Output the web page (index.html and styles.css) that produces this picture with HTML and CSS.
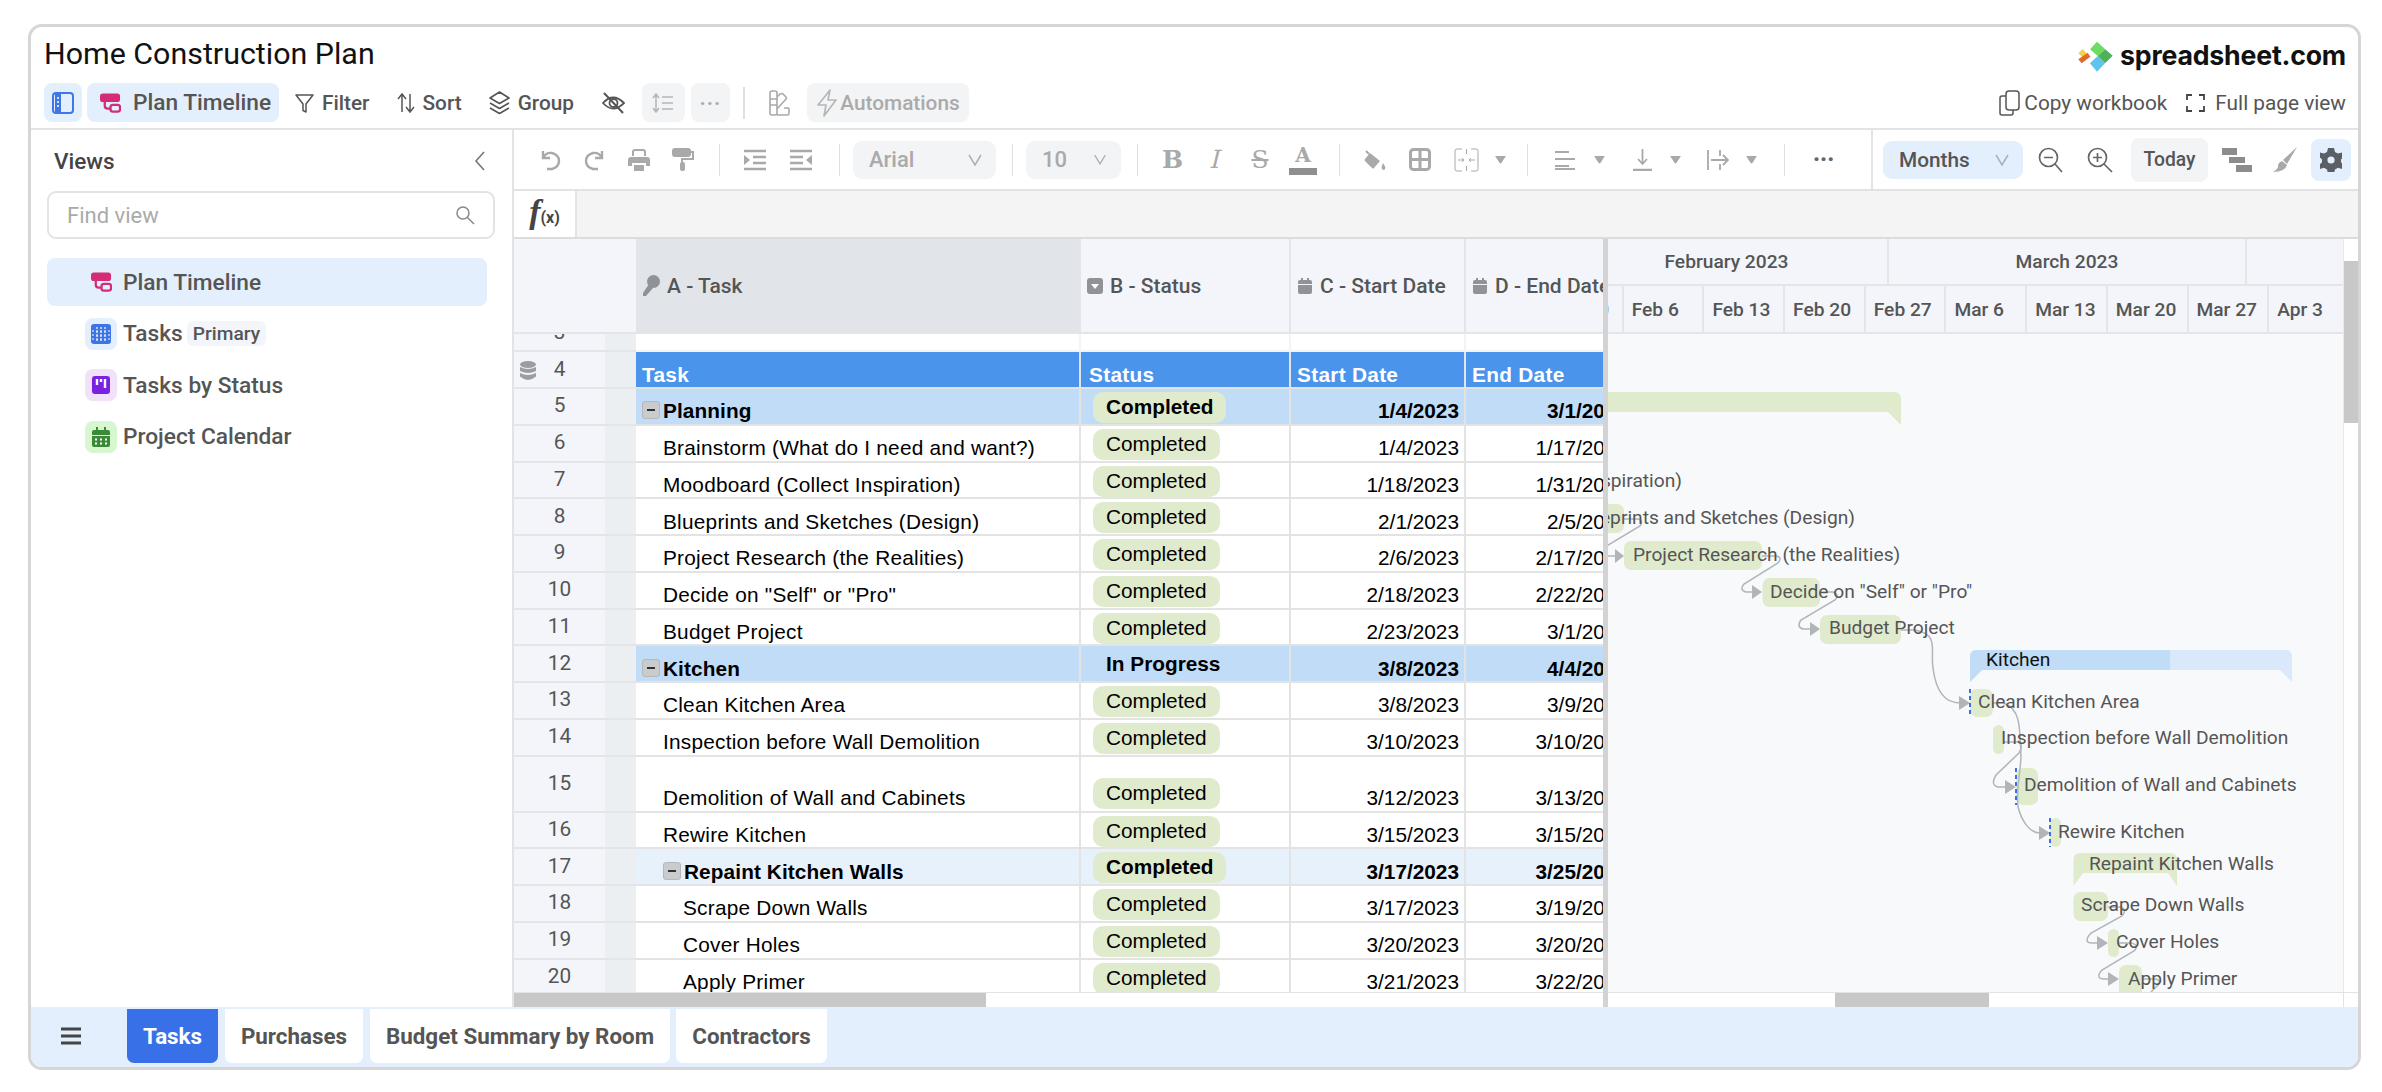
FILE: index.html
```html
<!DOCTYPE html>
<html lang="en">
<head>
<meta charset="utf-8">
<title>Home Construction Plan</title>
<link rel="stylesheet" href="styles.css">
</head>
<body>
<svg class="defs" width="0" height="0">
  <symbol id="timeline" viewBox="0 0 22 20"><rect x="0" y="0" width="21" height="9" rx="3" fill="#d42d76"/><path d="M5 8v5q0 3 3 3h3" fill="none" stroke="#d42d76" stroke-width="2.4"/><rect x="11" y="12" width="10" height="7" rx="2.5" fill="none" stroke="#d42d76" stroke-width="2.4"/></symbol>
  <symbol id="caret" viewBox="0 0 14 10"><path d="M1 1h12L8 9q-1 1-2 0z" fill="#a9a9a9"/></symbol>
  <symbol id="chev" viewBox="0 0 16 12"><path d="M2 1l6 10 6-10" fill="none" stroke="#a9b0b8" stroke-width="1.5"/></symbol>
  <symbol id="calend" viewBox="0 0 16 16"><path d="M1 4q0-2 2-2h1V0h2v2h4V0h2v2h1q2 0 2 2v2H1zM1 7h14v7q0 2-2 2H3q-2 0-2-2z" fill="#8f9296"/></symbol>
</svg>
<div class="window">
  <header class="head">
    <div class="head-top">
      <h1 class="title">Home Construction Plan</h1>
      <div class="logo">
        <svg class="logo-mark" width="36" height="32" viewBox="0 0 36 32"><polygon points="20,1.7 28.3,9.3 20.7,16 13,9.3" fill="#6cdc63"/><polygon points="28.3,9.3 35.7,15.7 28,23.3 20.7,16" fill="#4eb05b"/><polygon points="20.7,16 28,23.3 20,31.7 13,23.3" fill="#5cc4ee"/><polygon points="5.7,9 9.7,13.3 5.7,17.3 1.3,13.3" fill="#f7cf4a"/><polygon points="10.7,12.7 13.3,16.7 4.7,23.3 1.3,19.3" fill="#dd6b2b"/></svg>
        <span class="logo-text">spreadsheet.com</span>
      </div>
    </div>
    <div class="head-bar">
      <button class="hb-btn side-toggle"><svg width="22" height="22" viewBox="0 0 22 22"><rect x="1" y="1" width="20" height="20" rx="3" fill="none" stroke="#3f78e6" stroke-width="2"/><path d="M3 2h6v18H3z" fill="#3f78e6"/><path d="M5 6h2M5 10h2M5 14h2" stroke="#fff" stroke-width="1.6"/></svg></button>
      <button class="hb-btn plan-btn"><svg width="21" height="20"><use href="#timeline"/></svg><span>Plan Timeline</span></button>
      <span class="tool t-filter"><svg width="19" height="22" viewBox="0 0 19 22"><path d="M1 3h17l-7 9v8l-3-1.5V12z" fill="none" stroke="#555" stroke-width="1.5" stroke-linejoin="round"/></svg>Filter</span>
      <span class="tool t-sort"><svg width="18" height="22" viewBox="0 0 18 22"><path d="M5 20V3M1 7l4-5 4 5M13 2v17M9 15l4 5 4-5" fill="none" stroke="#555" stroke-width="1.5"/></svg>Sort</span>
      <span class="tool t-group"><svg width="21" height="24" viewBox="0 0 21 24"><path d="M10.500 1L20 7l-9.500 5.500L1 7zM1 12l9.500 5.500L20 12M1 17l9.500 5.500L20 17" fill="none" stroke="#555" stroke-width="1.6" stroke-linejoin="round"/></svg>Group</span>
      <svg class="t-hide" width="23" height="22" viewBox="0 0 23 22"><path d="M1 11q10-11 21 0-11 11-21 0z" fill="none" stroke="#555" stroke-width="1.8"/><circle cx="11.500" cy="11" r="4" fill="none" stroke="#555" stroke-width="1.800"/><path d="M2 1l19 20" stroke="#555" stroke-width="2"/></svg>
      <button class="hb-off t-line"><svg width="22" height="22" viewBox="0 0 22 22"><path d="M4 3v16M1 6l3-4 3 4M1 16l3 4 3-4M10 5h11M10 11h11M10 17h11" fill="none" stroke="#b5b5b5" stroke-width="1.500"/></svg></button>
      <button class="hb-off t-more">&#183;&#183;&#183;</button>
      <i class="vsep"></i>
      <svg class="t-pal" width="22" height="26" viewBox="0 0 22 26"><path d="M2 3q0-2 2-2h3q2 0 2 2v20q0 2-2 2H4q-2 0-2-2zM2 9h7M2 15h7M9 7l3-3q1-1 3 0l3 3q1 1 0 2L9 19M9 25h11q1 0 1-2v-4q0-1-1-1h-4" fill="none" stroke="#a9a9a9" stroke-width="1.600"/></svg>
      <button class="hb-off auto"><svg width="22" height="28" viewBox="0 0 22 28"><path d="M14 1L2 16h8l-2 11 12-16h-8z" fill="none" stroke="#b5b5b5" stroke-width="1.600" stroke-linejoin="round"/></svg><span>Automations</span></button>
      <span class="hb-right">
        <span class="link"><svg width="21" height="26" viewBox="0 0 21 26"><path d="M7 6H3q-2 0-2 2v15q0 2 2 2h9q2 0 2-2v-3" fill="none" stroke="#555" stroke-width="1.500"/><rect x="7" y="1" width="13" height="19" rx="3" fill="none" stroke="#555" stroke-width="1.500"/></svg>Copy workbook</span>
        <span class="link full"><svg width="19" height="18" viewBox="0 0 19 18"><path d="M1 6V1h5M13 1h5v5M18 12v5h-5M6 17H1v-5" fill="none" stroke="#444" stroke-width="1.800"/></svg>Full page view</span>
      </span>
    </div>
  </header>

  <main class="main">
    <aside class="side">
      <div class="side-head"><span class="views">Views</span><svg width="12" height="20" viewBox="0 0 12 20"><path d="M10 1L2 10l8 9" fill="none" stroke="#777" stroke-width="1.600"/></svg></div>
      <div class="search"><span>Find view</span><svg width="20" height="20" viewBox="0 0 20 20"><circle cx="8" cy="8" r="6" fill="none" stroke="#888" stroke-width="1.500"/><path d="M12.500 12.500L19 19" stroke="#888" stroke-width="1.500"/></svg></div>
      <nav class="view-list">
        <a class="view active"><span class="tile"><svg width="21" height="20"><use href="#timeline"/></svg></span><span>Plan Timeline</span></a>
        <a class="view"><span class="tile blue"><svg width="20" height="20" viewBox="0 0 20 20"><rect width="20" height="20" rx="3" fill="#3e75e6"/><path d="M1 7h18M1 11h18M1 15h18M6 3v16M10 3v16M14 3v16" stroke="#fff" stroke-width="1.200" stroke-dasharray="2 2"/></svg></span><span>Tasks</span><em class="badge">Primary</em></a>
        <a class="view"><span class="tile purple"><svg width="18" height="18" viewBox="0 0 18 18"><rect width="18" height="18" rx="3" fill="#7a22e0"/><path d="M5 3v6M9 3v3M13 3v9" stroke="#fff" stroke-width="2.400"/></svg></span><span>Tasks by Status</span></a>
        <a class="view"><span class="tile green"><svg width="18" height="20" viewBox="0 0 18 20"><path d="M0 5q0-2 2-2h2V0h2v3h6V0h2v3h2q2 0 2 2v3H0zM0 9h18v9q0 2-2 2H2q-2 0-2-2z" fill="#3a8a38"/><path d="M3 12.500h12M3 16.500h12" stroke="#fff" stroke-width="1.800" stroke-dasharray="2 3"/></svg></span><span>Project Calendar</span></a>
      </nav>
    </aside>

    <section class="work">
      <div class="ribbon">
        <svg class="ic" width="21" height="22" viewBox="0 0 21 22"><path d="M3 2v7h7M3 9q3-6 9-5 7 2 7 8t-7 8H7" fill="none" stroke="#a9a9a9" stroke-width="2.400"/></svg>
        <svg class="ic g23" width="21" height="22" viewBox="0 0 21 22"><path d="M18 2v7h-7M18 9q-3-6-9-5-7 2-7 8t7 8h5" fill="none" stroke="#a9a9a9" stroke-width="2.400"/></svg>
        <svg class="ic g23" width="22" height="22" viewBox="0 0 22 22"><path d="M5 7V3q0-2 2-2h8q2 0 2 2v4" fill="none" stroke="#a9a9a9" stroke-width="2"/><path d="M3 8h16q3 0 3 3v6h-4v-3H4v3H0v-6q0-3 3-3zM6 16h10v6H6z" fill="#a9a9a9"/></svg>
        <svg class="ic g22" width="22" height="23" viewBox="0 0 22 23"><rect x="0" y="0" width="19" height="9" rx="3" fill="#a9a9a9"/><path d="M19 4h2v7H10v4" fill="none" stroke="#a9a9a9" stroke-width="2"/><rect x="8" y="14" width="5" height="9" rx="2" fill="#a9a9a9"/></svg>
        <i class="vsep rib-sep m25"></i>
        <svg class="ic g24" width="22" height="22" viewBox="0 0 22 22"><path d="M0 2h22M9 8h13M9 14h13M0 20h22" stroke="#a9a9a9" stroke-width="2.400"/><path d="M0 6l6 5-6 5z" fill="#a9a9a9"/></svg>
        <svg class="ic g24" width="22" height="22" viewBox="0 0 22 22"><path d="M0 2h22M0 8h13M0 14h13M0 20h22" stroke="#a9a9a9" stroke-width="2.400"/><path d="M22 6l-6 5 6 5z" fill="#a9a9a9"/></svg>
        <i class="vsep rib-sep m27"></i>
        <span class="sel font g13"><span>Arial</span><svg width="16" height="12"><use href="#chev"/></svg></span>
        <i class="vsep rib-sep m16"></i>
        <span class="sel size g13"><span>10</span><svg width="14" height="11"><use href="#chev"/></svg></span>
        <i class="vsep rib-sep m16"></i>
        <b class="glyph g24">B</b>
        <i class="glyph slant g24">I</i>
        <s class="glyph g24">S</s>
        <span class="color-a g19"><span>A</span></span>
        <i class="vsep rib-sep m22"></i>
        <svg class="ic g24" width="22" height="22" viewBox="0 0 22 22"><path d="M2 2l3 3" stroke="#a9a9a9" stroke-width="2"/><path d="M6 4l10 8-6 7q-1 1-2 0L1 12q-1-1 0-2z" fill="#a9a9a9"/><path d="M19 14q3 4 2 6t-3 0q-1-2 1-6z" fill="#a9a9a9"/></svg>
        <svg class="ic g23" width="22" height="23" viewBox="0 0 22 23"><rect x="1.500" y="1.500" width="19" height="20" rx="3" fill="none" stroke="#a9a9a9" stroke-width="3"/><path d="M11 2v19M2 11.500h18" stroke="#a9a9a9" stroke-width="3"/></svg>
        <svg class="ic g23" width="25" height="24" viewBox="0 0 25 24"><path d="M8 1H3Q1 1 1 3v18q0 2 2 2h5M17 1h5q2 0 2 2v18q0 2-2 2h-5M12.500 1v5M12.500 18v5M4 12h6M8 10l2 2-2 2M21 12h-6M17 10l-2 2 2 2" fill="none" stroke="#a9a9a9" stroke-width="1"/></svg>
        <svg class="cr g15" width="13" height="9"><use href="#caret"/></svg>
        <i class="vsep rib-sep m20"></i>
        <svg class="ic g27" width="20" height="20" viewBox="0 0 20 20"><path d="M0 2h14M0 9h20M0 16h14M0 19h20" stroke="#a9a9a9" stroke-width="2"/></svg>
        <svg class="cr g18" width="13" height="9"><use href="#caret"/></svg>
        <svg class="ic g27" width="19" height="22" viewBox="0 0 19 22"><path d="M9.500 0v14M5 10l4.500 5 4.500-5" fill="none" stroke="#a9a9a9" stroke-width="1.800"/><path d="M0 21h19" stroke="#a9a9a9" stroke-width="2.600"/></svg>
        <svg class="cr g17" width="13" height="9"><use href="#caret"/></svg>
        <svg class="ic g25" width="22" height="20" viewBox="0 0 22 20"><path d="M1 0v20M13 0v6M13 14v6M4 10h16M16 5l5 5-5 5" fill="none" stroke="#a9a9a9" stroke-width="1.800"/></svg>
        <svg class="cr g16" width="13" height="9"><use href="#caret"/></svg>
        <i class="vsep rib-sep m26"></i>
        <span class="dots">&#183;&#183;&#183;</span>
        <i class="rib-full"></i>
        <span class="months"><span>Months</span><svg width="16" height="12"><use href="#chev"/></svg></span>
        <svg class="ic g15" width="25" height="26" viewBox="0 0 25 26"><circle cx="10.500" cy="10.500" r="9" fill="none" stroke="#666" stroke-width="1.700"/><path d="M17 17l7 8M6 10.500h9" stroke="#666" stroke-width="1.700"/></svg>
        <svg class="ic g24" width="26" height="26" viewBox="0 0 26 26"><circle cx="10.500" cy="10.500" r="9" fill="none" stroke="#666" stroke-width="1.700"/><path d="M17 17l8 8M6 10.500h9M10.500 6v9" stroke="#666" stroke-width="1.700"/></svg>
        <button class="today">Today</button>
        <svg class="ic g14" width="30" height="24" viewBox="0 0 30 24"><path d="M0 0h15v7H0zM7 9h16v6H7zM14 17h16v7H14z" fill="#8c8c8c"/></svg>
        <svg class="ic g21" width="24" height="25" viewBox="0 0 24 25"><path d="M24 0L10 13l4 4zM9 14l5 4q-2 7-14 7 6-3 5-7 1-3 4-4z" fill="#a9a9a9"/></svg>
        <span class="gear"><svg width="22" height="24" viewBox="0 0 22 24"><path d="M8 0h6l1 4 3 1.600 4-1.200 2 4-3 3v2.800l3 3-2 3.800-4-1.200-3 1.600-1 4H8l-1-4-3-1.600-4 1.200-1-3.800 3-3v-2.800l-3-3 1-4 4 1.200L7 4z" fill="#5a6066"/><circle cx="11" cy="12" r="3.600" fill="#e4effd"/></svg></span>
      </div>

      <div class="formula"><span class="fx"><i>f</i><b>(x)</b></span></div>

      <div class="panes">
        <div class="grid-pane">
          <div class="row col-head">
            <div class="hc"></div><div class="hc"></div>
            <div class="hc sel-col"><svg width="18" height="22" viewBox="0 0 18 22"><circle cx="11.500" cy="6.500" r="6.500" fill="#8f9296"/><path d="M7 9L1 18v3h3l7-8z" fill="#8f9296"/></svg>A - Task</div>
            <div class="hc"><svg width="16" height="16" viewBox="0 0 16 16"><rect width="16" height="16" rx="3" fill="#8f9296"/><path d="M4 6h8l-4 5z" fill="#fff"/></svg>B - Status</div>
            <div class="hc"><svg width="16" height="16"><use href="#calend"/></svg>C - Start Date</div>
            <div class="hc"><svg width="16" height="16"><use href="#calend"/></svg>D - End Date</div>
          </div>
          <div class="rows">
            <div class="row r3"><div class="n">3</div><div class="g"></div><div class="c"></div><div class="c"></div><div class="c"></div><div class="c"></div></div>
            <div class="row th"><div class="n"><svg class="db" width="16" height="19" viewBox="0 0 16 19"><ellipse cx="8" cy="3.500" rx="8" ry="3.500" fill="#9a9da1"/><path d="M0 6q8 4 16 0v4q-8 4-16 0zM0 12q8 4 16 0v3.500q-8 7-16 0z" fill="#9a9da1"/></svg>4</div><div class="g"></div><div class="c">Task</div><div class="c st">Status</div><div class="c">Start Date</div><div class="c">End Date</div></div>
            <div class="row grp"><div class="n">5</div><div class="g"></div><div class="c name"><span class="minus"></span>Planning</div><div class="c st"><span class="chip">Completed</span></div><div class="c d">1/4/2023</div><div class="c d">3/1/2023</div></div>
            <div class="row"><div class="n">6</div><div class="g"></div><div class="c l1">Brainstorm (What do I need and want?)</div><div class="c st"><span class="chip">Completed</span></div><div class="c d">1/4/2023</div><div class="c d">1/17/2023</div></div>
            <div class="row"><div class="n">7</div><div class="g"></div><div class="c l1">Moodboard (Collect Inspiration)</div><div class="c st"><span class="chip">Completed</span></div><div class="c d">1/18/2023</div><div class="c d">1/31/2023</div></div>
            <div class="row"><div class="n">8</div><div class="g"></div><div class="c l1">Blueprints and Sketches (Design)</div><div class="c st"><span class="chip">Completed</span></div><div class="c d">2/1/2023</div><div class="c d">2/5/2023</div></div>
            <div class="row"><div class="n">9</div><div class="g"></div><div class="c l1">Project Research (the Realities)</div><div class="c st"><span class="chip">Completed</span></div><div class="c d">2/6/2023</div><div class="c d">2/17/2023</div></div>
            <div class="row"><div class="n">10</div><div class="g"></div><div class="c l1">Decide on "Self" or "Pro"</div><div class="c st"><span class="chip">Completed</span></div><div class="c d">2/18/2023</div><div class="c d">2/22/2023</div></div>
            <div class="row"><div class="n">11</div><div class="g"></div><div class="c l1">Budget Project</div><div class="c st"><span class="chip">Completed</span></div><div class="c d">2/23/2023</div><div class="c d">3/1/2023</div></div>
            <div class="row grp"><div class="n">12</div><div class="g"></div><div class="c name"><span class="minus"></span>Kitchen</div><div class="c st"><span class="chip plain">In Progress</span></div><div class="c d">3/8/2023</div><div class="c d">4/4/2023</div></div>
            <div class="row"><div class="n">13</div><div class="g"></div><div class="c l1">Clean Kitchen Area</div><div class="c st"><span class="chip">Completed</span></div><div class="c d">3/8/2023</div><div class="c d">3/9/2023</div></div>
            <div class="row"><div class="n">14</div><div class="g"></div><div class="c l1">Inspection before Wall Demolition</div><div class="c st"><span class="chip">Completed</span></div><div class="c d">3/10/2023</div><div class="c d">3/10/2023</div></div>
            <div class="row tall"><div class="n">15</div><div class="g"></div><div class="c l1">Demolition of Wall and Cabinets</div><div class="c st"><span class="chip">Completed</span></div><div class="c d">3/12/2023</div><div class="c d">3/13/2023</div></div>
            <div class="row"><div class="n">16</div><div class="g"></div><div class="c l1">Rewire Kitchen</div><div class="c st"><span class="chip">Completed</span></div><div class="c d">3/15/2023</div><div class="c d">3/15/2023</div></div>
            <div class="row sub"><div class="n">17</div><div class="g"></div><div class="c name sub-name"><span class="minus"></span>Repaint Kitchen Walls</div><div class="c st"><span class="chip">Completed</span></div><div class="c d">3/17/2023</div><div class="c d">3/25/2023</div></div>
            <div class="row"><div class="n">18</div><div class="g"></div><div class="c l2">Scrape Down Walls</div><div class="c st"><span class="chip">Completed</span></div><div class="c d">3/17/2023</div><div class="c d">3/19/2023</div></div>
            <div class="row"><div class="n">19</div><div class="g"></div><div class="c l2">Cover Holes</div><div class="c st"><span class="chip">Completed</span></div><div class="c d">3/20/2023</div><div class="c d">3/20/2023</div></div>
            <div class="row"><div class="n">20</div><div class="g"></div><div class="c l2">Apply Primer</div><div class="c st"><span class="chip">Completed</span></div><div class="c d">3/21/2023</div><div class="c d">3/22/2023</div></div>
          </div>
          <div class="hscroll left-scroll"><i></i></div>
        </div>
        <div class="splitter"></div>
        <div class="gantt">
          <div class="gantt-body">
            <div class="gantt-view">
              <div class="months-row"><div class="mo feb">February 2023</div><div class="mo mar">March 2023</div><div class="mo apr"></div></div>
              <div class="weeks-row"><div class="wk">Jan 30</div><div class="wk">Feb 6</div><div class="wk">Feb 13</div><div class="wk">Feb 20</div><div class="wk">Feb 27</div><div class="wk">Mar 6</div><div class="wk">Mar 13</div><div class="wk">Mar 20</div><div class="wk">Mar 27</div><div class="wk">Apr 3</div></div>
              <div class="canvas">
                <svg class="chart" width="736" height="658" viewBox="1608 334 736 658">
                  <g fill="#e0ebcd">
                    <path d="M1590 392H1894Q1901 392 1901 399V425L1888 412H1590Z"/>
                    <rect x="1590" y="504" width="34" height="29" rx="7"/>
                    <rect x="1624" y="541" width="138" height="29" rx="7"/>
                    <rect x="1762.500" y="578" width="57.500" height="29" rx="7"/>
                    <rect x="1820" y="615" width="81" height="29" rx="7"/>
                    <rect x="1970" y="689" width="23" height="28" rx="7"/>
                    <rect x="1993" y="725" width="11" height="29" rx="5.500"/>
                    <rect x="2016" y="768" width="22" height="37" rx="7"/>
                    <rect x="2050" y="818" width="11" height="29" rx="5.500"/>
                    <path d="M2073.500 886V860Q2073.500 853 2080 853H2170Q2177 853 2177 860V886L2168 873H2083Z"/>
                    <rect x="2073.500" y="892" width="34.500" height="29" rx="7"/>
                    <rect x="2108" y="929" width="11" height="28" rx="5.500"/>
                    <rect x="2119" y="965" width="23" height="40" rx="7"/>
                  </g>
                  <path d="M1970 682V657Q1970 650 1977 650H2285Q2292 650 2292 657V682L2280 670H1982Z" fill="#d9e8fa"/>
                  <path d="M1970 682V657Q1970 650 1977 650H2170V670H1982Z" fill="#c0dcf7"/>
                  <g fill="none" stroke="#b1b4b9" stroke-width="1.500">
                    <path d="M1624 519H1638Q1644 520 1640 526L1600 550"/>
                    <path d="M1608 556H1616"/>
                    <path d="M1762 556H1776Q1783 557 1778 563L1744 584Q1739 590 1746 592H1753"/>
                    <path d="M1820 592H1833Q1840 594 1835 600L1801 620Q1796 627 1803 629H1811"/>
                    <path d="M1901 630H1915C1940 635 1930 650 1933 668C1936 692 1945 703 1960 703"/>
                    <path d="M1993 703H2003C2020 708 2020 725 2021 757C2020 775 2016 790 2018 807C2022 822 2030 833 2040 833"/>
                    <path d="M2004 742H2018Q2024 745 2019 753L1996 775Q1990 785 1998 787H2006"/>
                    <path d="M2108 907H2120Q2128 909 2122 916L2091 933Q2083 942 2091 943H2098"/>
                    <path d="M2119 943H2131Q2140 945 2134 951L2102 970Q2095 978 2103 979H2109"/>
                    <path d="M2142 979H2156Q2162 981 2158 985L2151 992"/>
                  </g>
                  <g fill="#b1b4b9">
                    <path d="M1615 549L1624 556L1615 563Z"/>
                    <path d="M1752 585L1762 592L1752 599Z"/>
                    <path d="M1810 622L1820 629L1810 636Z"/>
                    <path d="M1959 696L1970 703L1959 710Z"/>
                    <path d="M2005 780L2016 787L2005 794Z"/>
                    <path d="M2039 826L2050 833L2039 840Z"/>
                    <path d="M2097 936L2108 943L2097 950Z"/>
                    <path d="M2108 972L2119 979L2108 986Z"/>
                  </g>
                  <g fill="none" stroke="#3a6fe6" stroke-width="2" stroke-dasharray="4 3">
                    <path d="M1970 689V717M2016 768V805M2050 818V847"/>
                  </g>
                </svg>
                <span class="lb lb-end" style="right:661px;top:135px">Moodboard (Collect Inspiration)</span>
                <span class="lb lb-end" style="right:488px;top:172px">Blueprints and Sketches (Design)</span>
                <span class="lb" style="left:25px;top:209px">Project Research (the Realities)</span>
                <span class="lb" style="left:162px;top:246px">Decide on "Self" or "Pro"</span>
                <span class="lb" style="left:221px;top:282px">Budget Project</span>
                <span class="lb dark" style="left:378px;top:314px">Kitchen</span>
                <span class="lb" style="left:370px;top:356px">Clean Kitchen Area</span>
                <span class="lb" style="left:393px;top:392px">Inspection before Wall Demolition</span>
                <span class="lb" style="left:416px;top:439px">Demolition of Wall and Cabinets</span>
                <span class="lb" style="left:450px;top:486px">Rewire Kitchen</span>
                <span class="lb" style="left:481px;top:518px">Repaint Kitchen Walls</span>
                <span class="lb" style="left:473px;top:559px">Scrape Down Walls</span>
                <span class="lb" style="left:508px;top:596px">Cover Holes</span>
                <span class="lb" style="left:520px;top:633px">Apply Primer</span>
              </div>
            </div>
            <div class="vscroll"><i></i></div>
          </div>
          <div class="hscroll right-scroll"><i></i><b class="corner"></b></div>
        </div>
      </div>
    </section>
  </main>

  <footer class="tabs">
    <span class="burger"><svg width="20" height="18" viewBox="0 0 20 18"><path d="M0 2h20M0 9h20M0 16h20" stroke="#444" stroke-width="3"/></svg></span>
    <button class="tab on">Tasks</button>
    <button class="tab purchases">Purchases</button>
    <button class="tab budget">Budget Summary by Room</button>
    <button class="tab contractors">Contractors</button>
  </footer>
</div>
</body>
</html>
```

FILE: styles.css
```css
* { box-sizing: border-box; }
html, body { margin: 0; padding: 0; background: #fff; }
body { font-family: Roboto, "Liberation Sans", sans-serif; color: #555; overflow: hidden; }
button { font: inherit; border: 0; padding: 0; background: none; color: inherit; }
svg { display: block; flex: none; }
.defs { position: absolute; }

.window { width: 2333px; height: 1046px; margin: 24px 0 0 28px; border: 3px solid #d6d6d6; border-radius: 14px; overflow: hidden; display: flex; flex-direction: column; background: #fff; }

.head { height: 103px; border-bottom: 2px solid #e3e3e3; flex: none; }
.head-top { height: 56px; display: flex; justify-content: space-between; padding: 0 12px 0 13px; }
.title { margin: 10px 0 0; font-size: 30.4px; line-height: 34px; font-weight: 400; color: #111; }
.logo { display: flex; align-items: flex-start; padding-top: 13px; }
.logo-text { font-family: Inter, sans-serif; font-weight: 700; font-size: 26.7px; line-height: 34px; color: #111; margin-left: 7px; letter-spacing: -0.2px; margin-top: -2px; }

.head-bar { height: 39px; display: flex; align-items: center; padding: 0 12px 0 13px; font-size: 20.8px; font-weight: 500; color: #555; }
.hb-btn { height: 39px; border-radius: 8px; background: #e4effd; display: flex; align-items: center; }
.side-toggle { width: 38px; justify-content: center; }
.plan-btn { width: 192px; margin-left: 5px; padding-left: 13px; gap: 12px; font-weight: 500; font-size: 22.7px; }
.tool { display: flex; align-items: center; gap: 8px; }
.t-filter { margin-left: 16px; }
.t-sort { margin-left: 28px; gap: 7px; }
.t-group { margin-left: 27px; }
.t-hide { margin-left: 28px; }
.hb-off { height: 39px; border-radius: 8px; background: #f3f4f5; display: flex; align-items: center; justify-content: center; color: #aaa; }
.t-line { width: 43px; margin-left: 17px; }
.t-more { width: 39px; margin-left: 6px; font-weight: 700; letter-spacing: 1px; }
.vsep { display: block; width: 2px; height: 32px; background: #e2dede; margin-left: 13px; flex: none; }
.t-pal { margin-left: 23px; }
.auto { width: 162px; margin-left: 17px; gap: 2px; font-weight: 500; }
.hb-right { margin-left: auto; display: flex; align-items: center; font-weight: 400; }
.link { display: flex; align-items: center; gap: 4px; }
.full { margin-left: 19px; gap: 10px; }

.main { flex: 1; min-height: 0; display: flex; }
.side { width: 483px; flex: none; border-right: 2px solid #e3e3e3; padding: 0 16px; }
.side-head { height: 61px; display: flex; align-items: center; justify-content: space-between; padding: 0 10px 0 7px; }
.views { font-size: 22.5px; font-weight: 500; color: #444; }
.search { width: 448px; height: 48px; border: 2px solid #e3e3e3; border-radius: 9px; display: flex; align-items: center; justify-content: space-between; padding: 0 18px 0 18px; font-size: 22px; color: #aaa; }
.view-list { margin-top: 19px; width: 440px; display: flex; flex-direction: column; gap: 3.5px; }
.view { height: 48px; border-radius: 8px; display: flex; align-items: center; padding-left: 38px; font-size: 22.7px; font-weight: 500; color: #555; }
.active { background: #e4effd; }
.tile { width: 32px; height: 32px; border-radius: 8px; display: flex; align-items: center; justify-content: center; margin-right: 6px; flex: none; }
.blue { background: #e4effd; }
.purple { background: #f0e2fb; }
.green { background: #d6f7cf; }
.badge { font-style: normal; height: 25px; margin-left: 4px; padding: 0 6px; background: #f3f5fa; border-radius: 6px; font-size: 19.2px; line-height: 25px; }

.work { flex: 1; min-width: 0; display: flex; flex-direction: column; }
.ribbon { height: 61px; flex: none; display: flex; align-items: center; padding-left: 26px; border-bottom: 2px solid #e3e3e3; }
.g13 { margin-left: 13px; } .g14 { margin-left: 14px; } .g15 { margin-left: 15px; } .g16 { margin-left: 16px; } .g17 { margin-left: 17px; } .g18 { margin-left: 18px; } .g19 { margin-left: 19px; } .g21 { margin-left: 21px; } .g22 { margin-left: 22px; } .g23 { margin-left: 23px; } .g24 { margin-left: 24px; } .g25 { margin-left: 25px; } .g27 { margin-left: 27px; }
.rib-sep { width: 1px; }
.m16 { margin-left: 16px; } .m20 { margin-left: 20px; } .m22 { margin-left: 22px; } .m25 { margin-left: 25px; } .m26 { margin-left: 26px; } .m27 { margin-left: 27px; }
.sel { height: 38px; border-radius: 9px; background: #f3f4f5; display: flex; align-items: center; justify-content: space-between; color: #aaa; font-size: 22px; font-weight: 500; }
.font { width: 143px; padding: 0 13px 0 16px; }
.size { width: 95px; padding: 0 14px 0 16px; }
.glyph { font-family: "DejaVu Serif", serif; font-size: 25px; font-weight: 400; font-style: normal; color: #a9a9a9; width: 20px; text-align: center; display: block; text-decoration-thickness: 2px; }
b.glyph { font-weight: 700; }
.slant { transform: skewX(-14deg); }
.color-a { width: 28px; height: 31px; border-bottom: 7px solid #8f8f8f; text-align: center; font-family: "DejaVu Serif", serif; font-weight: 700; font-size: 20px; line-height: 23px; color: #a9a9a9; }
.dots { margin-left: 28px; font-size: 22px; font-weight: 900; color: #666; letter-spacing: 0; line-height: 1; width: 18px; }
.rib-full { display: block; width: 2px; height: 59px; background: #e3e3e3; margin-left: 40px; flex: none; }
.months { margin-left: 10px; width: 140px; height: 38px; border-radius: 9px; background: #e4effd; display: flex; align-items: center; justify-content: space-between; padding: 0 13px 0 16px; font-size: 20.8px; font-weight: 500; color: #555; }
.today { width: 77px; height: 44px; margin-left: 18px; background: #f3f4f5; border-radius: 8px; font-size: 19.3px; font-weight: 500; color: #555; }
.gear { width: 40px; height: 42px; margin-left: 14px; border-radius: 8px; background: #e4effd; display: flex; align-items: center; justify-content: center; }

.formula { height: 48px; flex: none; background: #f4f4f4; border-bottom: 2px solid #dcdcdc; }
.fx { display: flex; align-items: center; justify-content: center; width: 63px; height: 46px; background: #fff; border-right: 2px solid #e3e3e3; color: #444; }
.fx i { font-family: "Liberation Serif", serif; font-size: 34px; font-weight: 700; margin-top: -4px; }
.fx b { font-size: 16px; margin-top: 6px; }

.panes { flex: 1; min-height: 0; display: flex; }
.grid-pane { width: 1089px; flex: none; display: flex; flex-direction: column; overflow: hidden; }
.row { display: grid; grid-template-columns: 91px 31px 445px 210px 175px 169px; height: 36.75px; width: 1121px; background: #fff; }
.col-head { height: 95px; flex: none; background: #f3f5fa; }
.hc { display: flex; align-items: center; gap: 7px; padding-left: 6px; font-size: 21px; font-weight: 500; color: #555; white-space: nowrap; border-right: 2px solid #e3e5e8; border-bottom: 2px solid #e3e5e8; overflow: hidden; }
.hc:nth-child(1), .hc:nth-child(2) { border-right: 0; }
.sel-col { background: #e1e5e9; }
.rows { height: 658px; flex: none; overflow: hidden; }
.r3 { margin-top: -18.5px; }
.n { position: relative; background: #f3f5fa; display: flex; align-items: center; justify-content: center; font-size: 20.8px; color: #555; border-bottom: 2px solid #e3e5e8; padding-bottom: 2px; }
.g { background: #eceff2; border-bottom: 2px solid #e3e5e8; }
.db { position: absolute; left: 6px; top: 9px; }
.c { font-family: "Liberation Sans", Arial, sans-serif; font-size: 20.8px; line-height: 24px; color: #000; display: flex; align-items: flex-end; white-space: nowrap; overflow: hidden; border-right: 2px solid #e3e3e3; border-bottom: 2px solid #e3e3e3; padding-bottom: 0.5px; }
.r3 .c { border-color: #f4f4f4; }
.th .c { background: #4a94ec; color: #fff; font-weight: 700; padding-left: 6px; letter-spacing: 0.3px; border-bottom-color: #e3e3e3; }
.l1 { padding-left: 27px; letter-spacing: 0.24px; }
.l2 { padding-left: 47px; letter-spacing: 0.24px; }
.name { font-weight: 700; padding-left: 6px; letter-spacing: 0.1px; }
.sub-name { padding-left: 27px; }
.minus { width: 18px; height: 18px; margin: 0 3px 4px 0; background: #c9cbcd; border: 1px solid #b5b7b9; border-radius: 3px; position: relative; flex: none; }
.minus::after { content: ""; position: absolute; left: 4px; right: 4px; top: 7px; height: 2px; background: #333; }
.grp .c { background: #c0dcf7; }
.sub .c { background: #e7f1fc; }
.grp .d, .sub .d { font-weight: 700; }
.d { justify-content: flex-end; padding-right: 5px; }
.st { padding-left: 12px; align-items: flex-start; padding-bottom: 0; }
.th .st { align-items: flex-end; padding-left: 8px; padding-bottom: 0.5px; }
.chip { height: 31px; line-height: 30px; margin-top: 3px; padding: 0 13px; background: #e0ebcd; border-radius: 10px; }
.grp .chip, .sub .chip { font-weight: 700; }
.plain { background: none; }
.tall { height: 56px; }
.tall .st { align-items: flex-end; }
.tall .chip { margin: 0 0 2px; }

.hscroll { height: 15px; flex: none; background: #fff; border-top: 1px solid #e3e3e3; position: relative; }
.hscroll i { display: block; height: 14px; background: #c8c8c8; }
.left-scroll i { width: 472px; }
.right-scroll { display: flex; }
.right-scroll i { width: 154px; margin-left: 227px; }
.corner { margin-left: auto; width: 15px; height: 14px; border-left: 1px solid #e3e3e3; }
.splitter { width: 5px; flex: none; background: #d3d3d3; }

.gantt { flex: 1; min-width: 0; display: flex; flex-direction: column; }
.gantt-body { height: 753px; flex: none; display: flex; }
.gantt-view { width: 736px; flex: none; overflow: hidden; background: #f8f9fb; display: flex; flex-direction: column; border-right: 1px solid #e8e8e8; }
.months-row { height: 47px; flex: none; background: #f3f5fa; display: flex; border-bottom: 2px solid #e3e5e8; font-size: 19.2px; font-weight: 500; color: #555; }
.weeks-row { height: 48px; flex: none; background: #f3f5fa; display: flex; border-bottom: 2px solid #e3e5e8; font-size: 19.2px; font-weight: 500; color: #555; }
.mo { flex: none; display: flex; align-items: center; justify-content: center; border-right: 2px solid #e3e5e8; }
.feb { width: 323px; margin-left: -42px; }
.mar { width: 358px; }
.apr { width: 346px; }
.wk { flex: none; width: 80.7px; padding-left: 8px; display: flex; align-items: center; border-right: 2px solid #e3e5e8; white-space: nowrap; }
.wk:first-child { margin-left: -65px; }
.canvas { position: relative; flex: 1; overflow: hidden; }
.chart { position: absolute; left: 0; top: 0; }
.lb { position: absolute; font-size: 19.2px; line-height: 24px; color: #555; white-space: nowrap; }
.dark { color: #111; }
.vscroll { flex: 1; background: #fff; padding-top: 22px; }
.vscroll i { display: block; height: 162px; background: #c8c8c8; }

.tabs { height: 60px; flex: none; background: #e4effd; display: flex; align-items: flex-start; padding-top: 2px; border-top: 0; }
.burger { width: 96px; height: 54px; padding-left: 30px; display: flex; align-items: center; flex: none; }
.tab { height: 54px; background: #fff; border-radius: 0 0 7px 7px; font-size: 22.4px; font-weight: 700; color: #555; flex: none; text-align: center; }
.on { width: 91px; background: #3870e8; color: #fff; }
.purchases { width: 138px; margin-left: 7px; }
.budget { width: 300px; margin-left: 7px; }
.contractors { width: 151px; margin-left: 6px; }
```
